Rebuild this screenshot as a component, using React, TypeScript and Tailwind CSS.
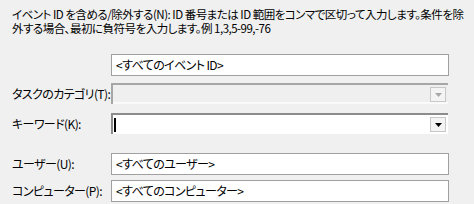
const font = { fontFamily: '"Meiryo UI", "Noto Sans CJK JP", sans-serif' };

function Arrow({ disabled }: { disabled?: boolean }) {
  return (
    <div className="flex h-[15px] w-[16px] items-center justify-center border border-[#c8c8c8] bg-[#f4f4f4]">
      <svg width="7" height="4" viewBox="0 0 7 4">
        <polygon points="0,0 7,0 3.5,4" fill={disabled ? "#a8a8a8" : "#000"} />
      </svg>
    </div>
  );
}

export default function App() {
  return (
    <div
      className="h-[204px] w-[474px] overflow-hidden bg-[#f0f0f0] text-[12px] leading-[14px] tracking-[-0.6px] text-black [font-feature-settings:'palt']"
      style={font}
    >
      <div className="pl-[12px] pt-[7px] text-[11.5px] tracking-[-0.5px]">
        <div className="whitespace-nowrap">イベント ID を含める/除外する(N): ID 番号または ID 範囲をコンマで区切って入力します。条件を除</div>
        <div className="whitespace-nowrap">外する場合、最初に負符号を入力します。例 1,3,5-99,-76</div>
      </div>

      <div className="ml-[111px] mt-[19px] flex h-[22px] w-[338px] items-center border border-[#a0a0a0] bg-white pl-[4px]">
        &lt;すべてのイベント ID&gt;
      </div>

      <div className="mt-[7px] flex items-center">
        <div className="w-[111px] whitespace-nowrap pl-[12px]">タスクのカテゴリ(T):</div>
        <div className="flex h-[21px] w-[337px] items-center justify-end border-l-2 border-t-2 border-[#a6a6a6] bg-[#efefef] pr-[2px] shadow-[inset_0_-2px_0_#fafafa]">
          <Arrow disabled />
        </div>
      </div>

      <div className="mt-[9px] flex items-center">
        <div className="w-[111px] whitespace-nowrap pl-[12px]">キーワード(K):</div>
        <div className="flex h-[21px] w-[337px] items-center justify-between border-l-2 border-t-2 border-[#8c8c8c] bg-white pr-[2px]">
          <div className="ml-[1px] h-[14px] w-[2px] bg-black" />
          <Arrow />
        </div>
      </div>

      <div className="mt-[19px] flex items-center">
        <div className="w-[111px] whitespace-nowrap pl-[12px]">ユーザー(U):</div>
        <div className="flex h-[22px] w-[338px] items-center border border-[#a0a0a0] bg-white pl-[4px]">
          &lt;すべてのユーザー&gt;
        </div>
      </div>

      <div className="mt-[5px] flex items-center">
        <div className="w-[111px] whitespace-nowrap pl-[12px]">コンピューター(P):</div>
        <div className="flex h-[22px] w-[338px] items-center border border-[#a0a0a0] bg-white pl-[4px]">
          &lt;すべてのコンピューター&gt;
        </div>
      </div>
    </div>
  );
}
